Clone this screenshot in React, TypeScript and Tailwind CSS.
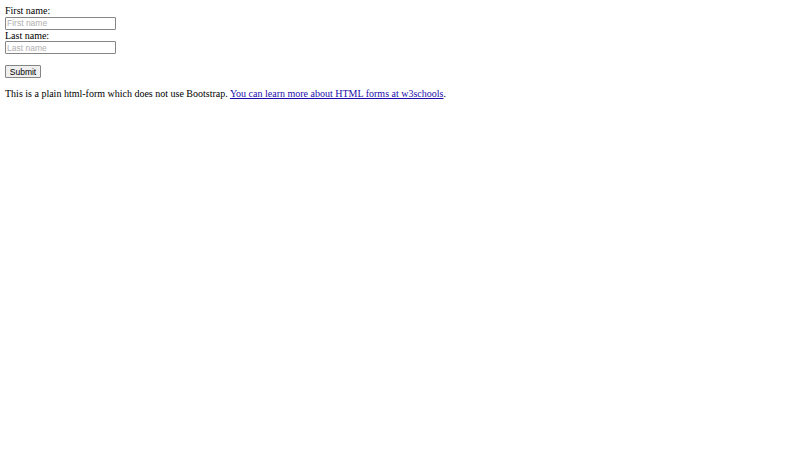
export default function App() {
	return (
		<div className="p-[5px] text-[10px] leading-[11.5px] text-black font-['Liberation_Serif',serif]">
			<form>
				<div>First name:</div>
				<input
					type="text"
					placeholder="First name"
					className="block w-[111px] h-[13px] border border-[#858585] rounded-[1px] px-[1px] text-[8.5px] leading-[10px] font-['Liberation_Sans',sans-serif] placeholder:text-[#b0b0b0]"
				/>
				<div>Last name:</div>
				<input
					type="text"
					placeholder="Last name"
					className="block w-[111px] h-[13px] border border-[#858585] rounded-[1px] px-[1px] text-[8.5px] leading-[10px] font-['Liberation_Sans',sans-serif] placeholder:text-[#b0b0b0]"
				/>
				<div className="h-[11px]" />
				<button
					type="submit"
					className="block w-[36px] h-[13px] border border-[#858585] rounded-[1px] bg-[#efefef] text-[8.5px] leading-[10px] font-['Liberation_Sans',sans-serif]"
				>
					Submit
				</button>
			</form>
			<p className="mt-[10px]">
				This is a plain html-form which does not use Bootstrap.{" "}
				<a href="#" className="text-[#1a0dab] underline">
					You can learn more about HTML forms at w3schools
				</a>
				.
			</p>
		</div>
	);
}
